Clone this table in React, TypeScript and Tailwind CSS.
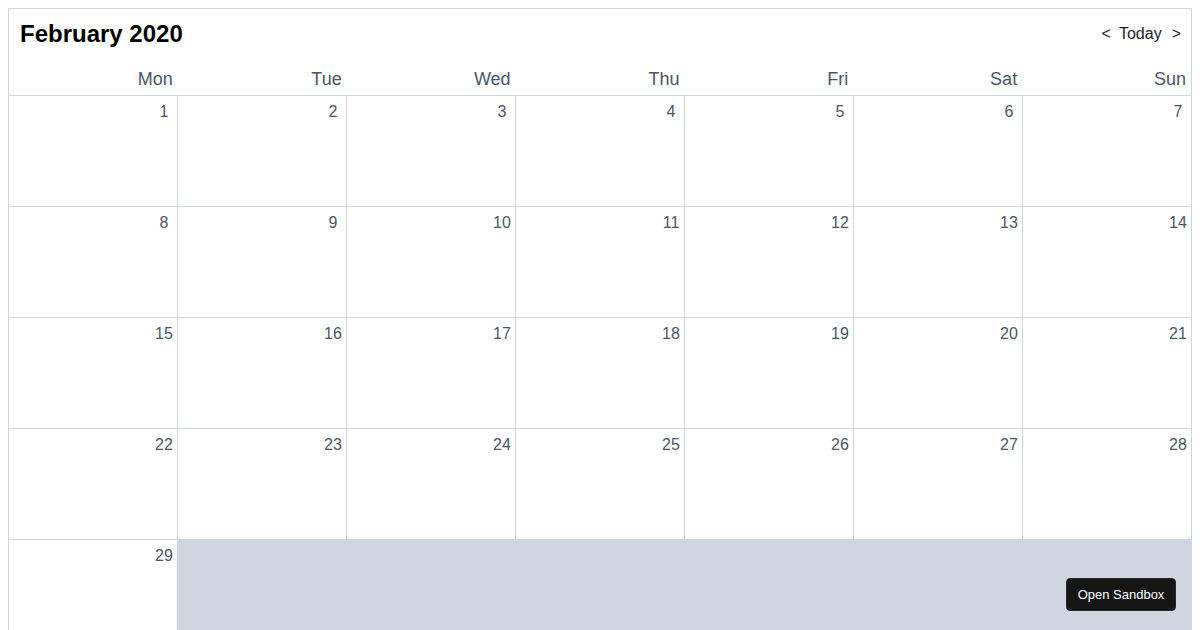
import React from "react"

const days = ["Mon", "Tue", "Wed", "Thu", "Fri", "Sat", "Sun"]

function DayCell({ n }: { n: number }) {
  return (
    <div className="h-[111px] border-r border-b border-[#cbd5e0] flex justify-end pr-[1px] pt-[4px]">
      <span className="w-6 text-center text-[16px] leading-6 text-[#4a5568]">{n}</span>
    </div>
  )
}

export default function App() {
  const weeks: number[][] = []
  for (let w = 0; w < 4; w++) {
    weeks.push(Array.from({ length: 7 }, (_, i) => w * 7 + i + 1))
  }

  return (
    <div className="min-h-screen bg-white font-['Liberation_Sans',Arial,sans-serif]">
      <div className="mx-2 mt-2 border-l border-t border-[#cbd5e0]">
        {/* Header */}
        <div className="border-r border-b border-[#cbd5e0]">
          <div className="flex items-center justify-between pl-[11px] pr-[10px] pt-[9px]">
            <h1 className="text-[24px] leading-8 font-bold text-black">February 2020</h1>
            <div className="flex items-center text-[16px] text-[#1a202c]">
              <button className="mr-[8px]">&lt;</button>
              <button>Today</button>
              <button className="ml-[10px]">&gt;</button>
            </div>
          </div>
          <div className="grid grid-cols-7 mt-[15px] pb-[2px]">
            {days.map((d) => (
              <div key={d} className="text-right pr-[5px] text-[18px] leading-7 text-[#4a5568]">
                {d}
              </div>
            ))}
          </div>
        </div>

        {/* Body */}
        <div className="grid grid-cols-7">
          {weeks.flat().map((n) => (
            <DayCell key={n} n={n} />
          ))}
          <DayCell n={29} />
          <div className="col-span-6 h-[111px] bg-[#cfd6e1]" />
        </div>
      </div>

      <button className="fixed right-[24px] bottom-[19px] w-[110px] h-[33px] rounded-[4px] border border-[#2a2a2a] bg-[#151515] text-white text-[13px] font-['Liberation_Sans',Arial,sans-serif]">
        Open Sandbox
      </button>
    </div>
  )
}
